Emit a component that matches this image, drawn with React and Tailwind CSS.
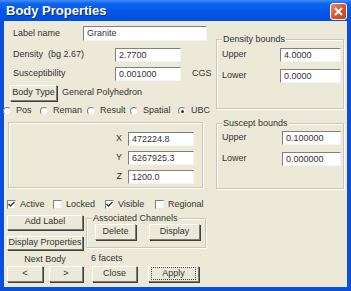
const font = { fontFamily: '"Liberation Sans", Arial, sans-serif' };

const Field = ({ value, className = "" }) => (
  <div
    className={`h-[14px] bg-white border border-t-[#808080] border-l-[#808080] border-r-[#f4f4f4] border-b-[#f4f4f4] pl-[3px] text-[9px] leading-[12px] text-[#333] ${className}`}
  >
    {value}
  </div>
);

const Btn = ({ children, className = "", focus = false }) => (
  <div
    className={`flex items-center justify-center bg-[#ECE9D8] border border-t-white border-l-white border-r-[#7a7a7a] border-b-[#7a7a7a] shadow-[1px_1px_0_#404040] text-[9px] text-[#333] ${className}`}
  >
    {focus ? (
      <span className="border border-dotted border-[#444] px-[10px] leading-[11px]">
        {children}
      </span>
    ) : (
      children
    )}
  </div>
);

const Group = ({ title, className = "", children }) => (
  <div
    className={`relative border border-[#cac7b6] shadow-[inset_1px_1px_0_#fff,1px_1px_0_#fff] ${className}`}
  >
    <span className="absolute left-[5px] -top-[7px] bg-[#ECE9D8] px-[1px] text-[9px] leading-[12px] text-[#333]">
      {title}
    </span>
    {children}
  </div>
);

const Radio = ({ label, checked, className = "" }) => (
  <div className={`flex items-center ${className}`}>
    <div className="w-[8px] h-[8px] rounded-full bg-white border border-t-[#808080] border-l-[#808080] border-r-[#e8e8e8] border-b-[#e8e8e8] flex items-center justify-center">
      {checked && <div className="w-[3px] h-[3px] rounded-full bg-[#333]" />}
    </div>
    <span className="ml-[5px] text-[9px] text-[#333]">{label}</span>
  </div>
);

const Check = ({ label, checked, className = "" }) => (
  <div className={`flex items-center ${className}`}>
    <div className="w-[9px] h-[9px] bg-white border border-t-[#808080] border-l-[#808080] border-r-[#e8e8e8] border-b-[#e8e8e8] flex items-center justify-center">
      {checked && (
        <svg width="7" height="7" viewBox="0 0 7 7">
          <path d="M0.5 3 L2.5 5 L6.5 1" stroke="#333" strokeWidth="1.4" fill="none" />
        </svg>
      )}
    </div>
    <span className="ml-[4px] text-[9px] text-[#333]">{label}</span>
  </div>
);

export default function App() {
  return (
    <div
      className="w-[351px] h-[291px] flex flex-col bg-[#0a4fd9] overflow-hidden"
      style={font}
    >
      {/* title bar */}
      <div className="h-[21px] shrink-0 flex items-center justify-between pl-[6px] pr-[4px] bg-[linear-gradient(180deg,#3d8ff7_0%,#0e62ee_18%,#0457e6_55%,#0250dc_100%)]">
        <span className="text-white font-bold text-[13px] [text-shadow:1px_1px_0_#0a2a80]">
          Body Properties
        </span>
        <div className="w-[17px] h-[17px] rounded-[3px] border border-white bg-[linear-gradient(135deg,#f08a6c_0%,#e0522f_50%,#c63d1c_100%)] flex items-center justify-center mt-[1px]">
          <svg width="9" height="9" viewBox="0 0 9 9">
            <path d="M1 1 L8 8 M8 1 L1 8" stroke="#fff" strokeWidth="2" />
          </svg>
        </div>
      </div>

      {/* client area */}
      <div className="mx-[4px] mb-[4px] flex-1 bg-[#ECE9D8] flex flex-col text-[9px] text-[#333]">
        <div className="flex">
          {/* left column */}
          <div className="w-[209px] flex flex-col">
            <div className="flex items-center mt-[5px]">
              <span className="ml-[9px] w-[70px]">Label name</span>
              <Field value="Granite" className="w-[124px] h-[15px]" />
            </div>
            <div className="flex items-center mt-[7px]">
              <span className="ml-[9px] w-[102px]">Density&nbsp; (bg 2.67)</span>
              <Field value="2.7700" className="w-[66px]" />
            </div>
            <div className="flex items-center mt-[5px]">
              <span className="ml-[9px] w-[102px]">Susceptibility</span>
              <Field value="0.001000" className="w-[66px]" />
              <span className="ml-[11px]">CGS</span>
            </div>
            <div className="flex items-center mt-[4px]">
              <Btn className="ml-[6px] w-[47px] h-[16px]">Body Type</Btn>
              <span className="ml-[5px]">General Polyhedron</span>
            </div>
            <div className="flex items-center mt-[4px] h-[12px] ml-[-1px]">
              <Radio label="Pos" className="w-[37px]" />
              <Radio label="Reman" className="w-[47px]" />
              <Radio label="Result" className="w-[43px]" />
              <Radio label="Spatial" className="w-[48px]" />
              <Radio label="UBC" checked />
            </div>
            <div className="ml-[4px] mt-[5px] w-[195px] h-[66px] border border-[#cac7b6] shadow-[inset_1px_1px_0_#fff,1px_1px_0_#fff] flex flex-col items-end pr-[8px] pt-[9px] gap-[5px]">
              {[
                ["X", "472224.8"],
                ["Y", "6267925.3"],
                ["Z", "1200.0"],
              ].map(([k, v]) => (
                <div key={k} className="flex items-center">
                  <span className="mr-[6px]">{k}</span>
                  <Field value={v} className="w-[66px]" />
                </div>
              ))}
            </div>
          </div>

          {/* right column */}
          <div className="flex flex-col ml-[3px]">
            <Group title="Density bounds" className="mt-[18px] w-[128px] h-[70px]">
              <div className="flex flex-col gap-[7px] pt-[8px]">
                <div className="flex items-center">
                  <span className="ml-[5px] w-[58px]">Upper</span>
                  <Field value="4.0000" className="w-[61px]" />
                </div>
                <div className="flex items-center">
                  <span className="ml-[5px] w-[58px]">Lower</span>
                  <Field value="0.0000" className="w-[61px]" />
                </div>
              </div>
            </Group>
            <Group title="Suscept bounds" className="mt-[14px] w-[128px] h-[66px]">
              <div className="flex flex-col gap-[7px] pt-[7px]">
                <div className="flex items-center">
                  <span className="ml-[5px] w-[60px]">Upper</span>
                  <Field value="0.100000" className="w-[59px]" />
                </div>
                <div className="flex items-center">
                  <span className="ml-[5px] w-[60px]">Lower</span>
                  <Field value="0.000000" className="w-[59px]" />
                </div>
              </div>
            </Group>
          </div>
        </div>

        {/* checkboxes */}
        <div className="flex items-center mt-[9px] ml-[3px]">
          <Check label="Active" checked className="w-[46px]" />
          <Check label="Locked" className="w-[52px]" />
          <Check label="Visible" checked className="w-[50px]" />
          <Check label="Regional" />
        </div>

        {/* bottom section */}
        <div className="flex mt-[2px]">
          <div className="flex flex-col ml-[3px] w-[76px]">
            <Btn className="h-[15px] mt-[1px]">Add Label</Btn>
            <Btn className="h-[14px] mt-[6px]">Display Properties</Btn>
            <span className="text-center mt-[3px] leading-[12px]">Next Body</span>
            <div className="flex justify-between mt-[1px]">
              <Btn className="w-[36px] h-[16px]">&lt;</Btn>
              <Btn className="w-[34px] h-[16px]">&gt;</Btn>
            </div>
          </div>
          <div className="flex flex-col ml-[3px]">
            <Group title="Associated Channels" className="mt-[4px] w-[120px] h-[30px]">
              <div className="flex pt-[5px] pl-[8px] gap-[13px]">
                <Btn className="w-[41px] h-[16px]">Delete</Btn>
                <Btn className="w-[51px] h-[16px]">Display</Btn>
              </div>
            </Group>
            <span className="ml-[5px] mt-[4px] leading-[12px]">6 facets</span>
            <div className="flex mt-[2px] ml-[6px] gap-[11px]">
              <Btn className="w-[45px] h-[16px]">Close</Btn>
              <Btn className="w-[51px] h-[16px]" focus>Apply</Btn>
            </div>
          </div>
        </div>
      </div>
    </div>
  );
}
